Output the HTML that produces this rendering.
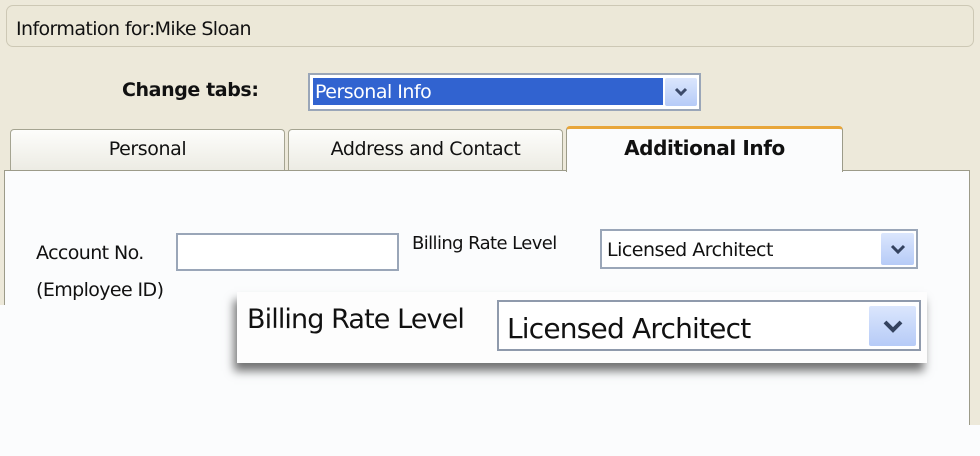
<!DOCTYPE html>
<html><head><meta charset="utf-8"><style>
*{margin:0;padding:0;box-sizing:border-box}
body{width:980px;height:456px;overflow:hidden;background:#fbfcfd;font-family:Tahoma,"DejaVu Sans","Liberation Sans",sans-serif;color:#111;position:relative}
.abs{position:absolute}
.btn{position:absolute;background:linear-gradient(#dbe6fd,#b6cbf7);border-radius:2px;display:flex;align-items:center;justify-content:center}
</style></head><body>
<div class="abs" style="left:0;top:0;width:980px;height:425px;background:#ede9da"></div>
<div class="abs" style="left:6px;top:5px;width:968px;height:42px;border:1px solid #cdc8b5;border-radius:7px;background:#ece8d8"></div>
<div class="abs" style="left:16px;top:18px;font-size:19px;letter-spacing:-0.6px">Information for:Mike Sloan</div>
<div class="abs" style="left:122px;top:79px;font-size:19px;font-weight:bold;letter-spacing:-0.4px">Change tabs:</div>
<div class="abs" style="left:308px;top:73px;width:393px;height:38px;border:2px solid #9aa6b8;background:#fff"></div>
<div class="abs" style="left:313px;top:78px;width:350px;height:27px;background:#3163d0;color:#fff;font-size:19px;padding:3px 0 0 2px;letter-spacing:-0.5px">Personal Info</div>
<div class="btn" style="left:665px;top:78px;width:32px;height:28px"><svg width="14" height="10"><path d="M2 2 L7 7 L12 2" stroke="#3c4a6a" stroke-width="3" fill="none"/></svg></div>
<div class="abs" style="left:10px;top:129px;width:275px;height:42px;border:1px solid #a5a491;border-bottom:none;border-radius:4px 4px 0 0;background:linear-gradient(#fdfdfb,#ecebe3)"></div>
<div class="abs" style="left:10px;top:138px;width:275px;text-align:center;font-size:19px;letter-spacing:-0.4px">Personal</div>
<div class="abs" style="left:288px;top:129px;width:275px;height:42px;border:1px solid #a5a491;border-bottom:none;border-radius:4px 4px 0 0;background:linear-gradient(#fdfdfb,#ecebe3)"></div>
<div class="abs" style="left:288px;top:138px;width:275px;text-align:center;font-size:19px;letter-spacing:-0.4px">Address and Contact</div>
<div class="abs" style="left:4px;top:170px;width:966px;height:255px;border:1px solid #9c9b89;border-bottom:none;background:#fbfcfd"></div>
<div class="abs" style="left:566px;top:126px;width:277px;height:46px;border:1px solid #9c9b89;border-top:3px solid #e8a63a;border-bottom:none;border-radius:4px 4px 0 0;background:#fbfcfd"></div>
<div class="abs" style="left:566px;top:136px;width:277px;text-align:center;font-size:20px;font-weight:bold;letter-spacing:-0.4px">Additional Info</div>
<div class="abs" style="left:0;top:305px;width:10px;height:130px;background:#fbfcfd"></div>
<div class="abs" style="left:36px;top:242px;font-size:19px;letter-spacing:-0.6px">Account No.</div>
<div class="abs" style="left:36px;top:279px;font-size:19px;letter-spacing:-0.6px">(Employee ID)</div>
<div class="abs" style="left:176px;top:233px;width:223px;height:38px;border:2px solid #9aa6b8;background:#fff"></div>
<div class="abs" style="left:412px;top:233px;font-size:18px;letter-spacing:-0.6px">Billing Rate Level</div>
<div class="abs" style="left:600px;top:229px;width:318px;height:40px;border:2px solid #9aa6b8;background:#fff;font-size:19px;padding:8px 0 0 5px;letter-spacing:-0.5px">Licensed Architect</div>
<div class="btn" style="left:881px;top:233px;width:33px;height:32px"><svg width="16" height="11"><path d="M2 2 L8 8 L14 2" stroke="#34425f" stroke-width="3" fill="none"/></svg></div>
<div class="abs" style="left:237px;top:292px;width:690px;height:71px;background:#fdfdfd;box-shadow:-3px 8px 9px rgba(0,0,0,0.55)"></div>
<div class="abs" style="left:247px;top:304px;font-size:27px;letter-spacing:-0.9px">Billing Rate Level</div>
<div class="abs" style="left:497px;top:300px;width:424px;height:51px;border:2px solid #8f9aac;background:#fff;font-size:28px;padding:10px 0 0 8px;letter-spacing:-0.8px">Licensed Architect</div>
<div class="btn" style="left:869px;top:306px;width:47px;height:40px"><svg width="22" height="14"><path d="M3 3 L11 11 L19 3" stroke="#34425f" stroke-width="4" fill="none"/></svg></div>
</body></html>
